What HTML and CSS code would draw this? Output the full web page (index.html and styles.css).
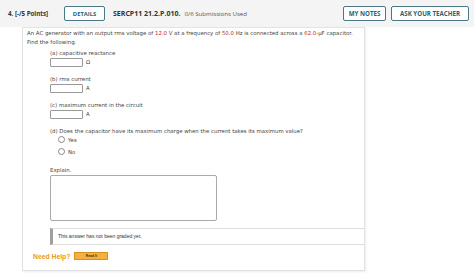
FILE: index.html
```html
<!DOCTYPE html>
<html>
<head>
<meta charset="utf-8">
<link rel="stylesheet" href="styles.css">
</head>
<body>
<div class="header">
  <span class="qnum">4. [-/5 Points]</span>
  <span class="btn details">DETAILS</span>
  <span class="code">SERCP11 21.2.P.010.</span>
  <span class="subs">0/6 Submissions Used</span>
  <span class="spacer"></span>
  <span class="btn notes">MY NOTES</span>
  <span class="btn ask">ASK YOUR TEACHER</span>
</div>
<div class="wrap">
  <div class="panel">
    <p class="intro">An AC generator with an output rms voltage of <span class="red">12.0</span> V at a frequency of <span class="red">50.0</span> Hz is connected across a <span class="red">62.0</span>-µF capacitor.<br>Find the following.</p>
    <div class="part first">
      <div class="label">(a) capacitive reactance</div>
      <div class="answer"><span class="inp"></span><span class="unit">Ω</span></div>
    </div>
    <div class="part">
      <div class="label">(b) rms current</div>
      <div class="answer"><span class="inp"></span><span class="unit">A</span></div>
    </div>
    <div class="part">
      <div class="label">(c) maximum current in the circuit</div>
      <div class="answer"><span class="inp"></span><span class="unit">A</span></div>
    </div>
    <div class="part">
      <div class="label">(d) Does the capacitor have its maximum charge when the current takes its maximum value?</div>
      <div class="radios">
        <div class="radio"><span class="circle"></span><span>Yes</span></div>
        <div class="radio"><span class="circle"></span><span>No</span></div>
      </div>
    </div>
    <div class="explain">
      <div class="label">Explain.</div>
      <div class="textarea"></div>
    </div>
    <div class="graded">This answer has not been graded yet.</div>
    <div class="help"><span class="need">Need Help?</span><span class="readit">Read It</span></div>
  </div>
</div>
</body>
</html>
```
FILE: styles.css
```css
html, body { margin: 0; padding: 0; background: #fff; }
body { width: 474px; height: 277px; overflow: hidden; }
.header {
  display: flex; align-items: center; height: 27px; background: #f4f4f4;
  padding: 0 5px 0 8px; box-sizing: border-box;
  font-family: "Open Sans", "Liberation Sans", sans-serif; color: #333;
}
.qnum { font-weight: 700; font-size: 6.2px; width: 56px; }
.btn {
  display: flex; align-items: center; justify-content: center;
  height: 15px; box-sizing: border-box; border: 1px solid #4a7686; border-radius: 2px;
  background: #fff; color: #2e5f70; font-weight: 700; font-size: 6.2px;
}
.details { width: 41px; margin-right: 8px; font-size: 5.8px; }
.notes { width: 43px; }
.ask { width: 78px; margin-left: 5px; }
.code { font-weight: 700; font-size: 7px; margin-right: 4px; }
.subs { font-size: 6.1px; color: #555; }
.spacer { flex: 1; }
.wrap { padding-left: 22px; }
.panel {
  width: 343px; height: 244px; box-sizing: border-box;
  border: 1px solid #e2e2e2; border-top: 1px solid #f3dede;
  box-shadow: 1px 1px 2px rgba(0,0,0,0.08);
  padding: 0 0 0 4px;
  font-family: "DejaVu Sans", Verdana, sans-serif; font-size: 5.4px; color: #444;
}
.intro { margin: 1px 0 0 0; line-height: 9px; }
.red { color: #c62828; }
.part, .explain { margin-left: 23px; }
.part { margin-top: 8px; }
.part.first { margin-top: 1.5px; }
.label { line-height: 9px; }
.answer { display: flex; align-items: center; height: 9px; }
.inp {
  width: 33px; height: 9px; box-sizing: border-box; border: 1px solid #999; border-radius: 1px;
  background: #fff;
}
.unit { margin-left: 3px; }
.radios { margin-top: -2px; }
.radio { display: flex; align-items: center; height: 12px; margin-left: 8px; }
.circle {
  width: 7px; height: 7px; border: 1px solid #888; border-radius: 50%; margin-right: 3px;
  box-sizing: border-box;
}
.explain { margin-top: 8px; }
.textarea {
  width: 167px; height: 46px; box-sizing: border-box; border: 1px solid #aaa; border-radius: 2px;
}
.graded {
  margin: 7px 0 0 23px; height: 17px; box-sizing: border-box;
  border: 1px solid #ddd; border-left: 3px solid #a0a0a0; border-right: none;
  padding-left: 5px; display: flex; align-items: center;
  font-family: "Liberation Sans", Arial, sans-serif; font-size: 5px; color: #333;
}
.help { display: flex; align-items: center; margin: 7px 0 0 6px; height: 9px; }
.need { font-family: "Liberation Sans", Arial, sans-serif; font-weight: 700; font-size: 6.8px; color: #e69a28; }
.readit {
  margin-left: 4px; width: 34px; height: 8px; box-sizing: border-box;
  background: #f7b03f; border: 1px solid #d9901e;
  display: flex; align-items: center; justify-content: center;
  font-family: "Liberation Sans", Arial, sans-serif; font-weight: 700; font-size: 3.4px; color: #333;
}
```
